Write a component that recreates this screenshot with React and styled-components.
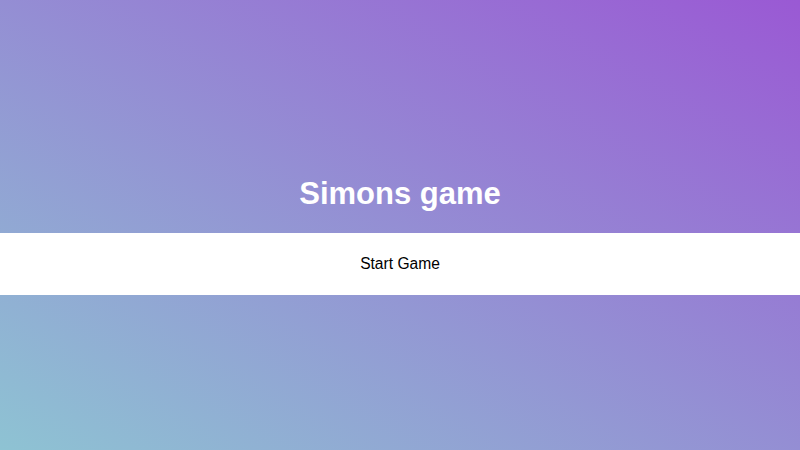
import React from "react";
import styled, { createGlobalStyle } from "styled-components";

const GlobalStyle = createGlobalStyle`
  html, body {
    margin: 0;
    padding: 0;
  }
  body {
    font-family: "Liberation Sans", Arial, sans-serif;
  }
`;

const Screen = styled.main`
  min-height: 100vh;
  display: flex;
  flex-direction: column;
  justify-content: center;
  align-items: stretch;
  background: linear-gradient(to right top, #8ec3d3, #9a59d4);
`;

const Title = styled.h1`
  margin: 21px 0;
  font-size: 31px;
  font-weight: 700;
  color: #ffffff;
  text-align: center;
`;

const StartButton = styled.button`
  width: 100%;
  border: none;
  background: #ffffff;
  color: #000000;
  font-family: "Liberation Sans", Arial, sans-serif;
  font-size: 15.6px;
  padding: 22px 0;
  cursor: pointer;
`;

const App = () => {
  return (
    <>
      <GlobalStyle />
      <Screen>
        <Title>Simons game</Title>
        <StartButton>Start Game</StartButton>
      </Screen>
    </>
  );
};

export default App;
